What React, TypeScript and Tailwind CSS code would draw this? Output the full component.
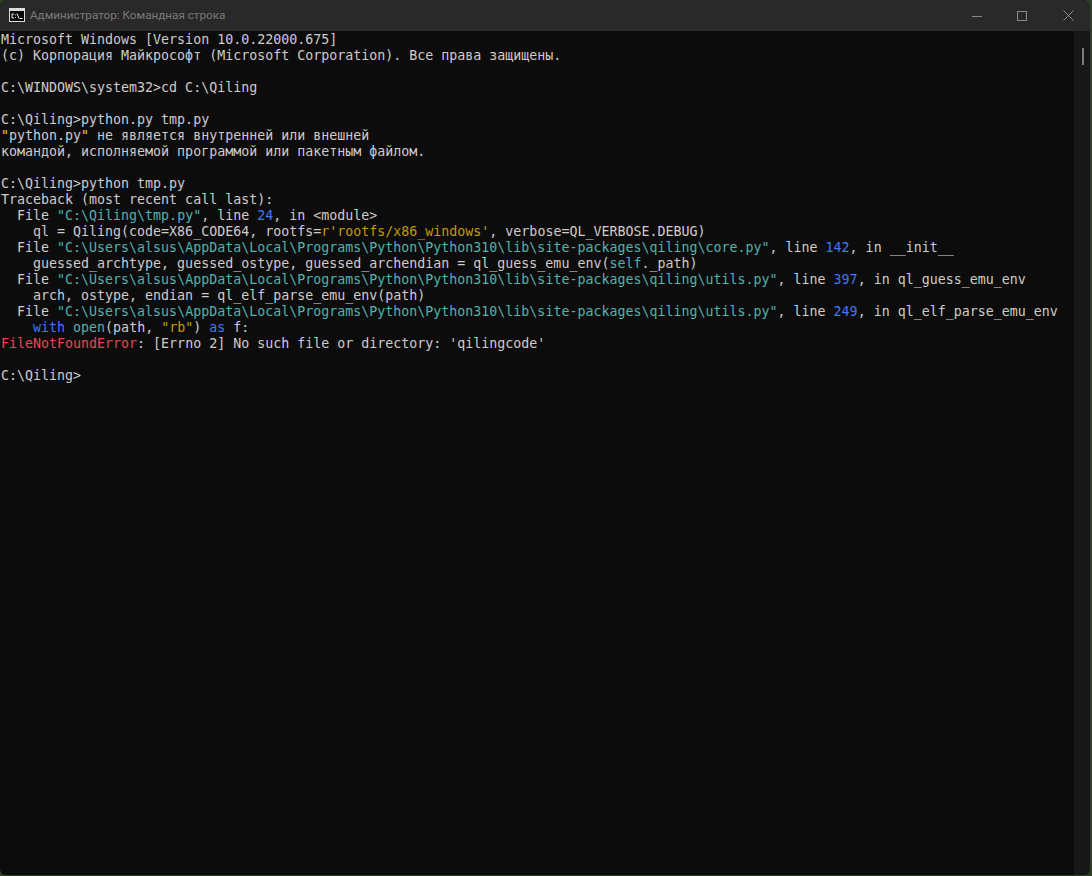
import React from "react";

const G = "text-[#cccccc]";
const C = "text-[#4db3b3]";
const B = "text-[#3b78ff]";
const Y = "text-[#c19c00]";
const R = "text-[#e74856]";

type Seg = [string, string?];
const lines: Seg[][] = [
  [["Microsoft Windows [Version 10.0.22000.675]"]],
  [["(c) Корпорация Майкрософт (Microsoft Corporation). Все права защищены."]],
  [],
  [["C:\\WINDOWS\\system32>cd C:\\Qiling"]],
  [],
  [["C:\\Qiling>python.py tmp.py"]],
  [['"python.py" не является внутренней или внешней']],
  [["командой, исполняемой программой или пакетным файлом."]],
  [],
  [["C:\\Qiling>python tmp.py"]],
  [["Traceback (most recent call last):"]],
  [["  File "], ['"C:\\Qiling\\tmp.py"', C], [", line "], ["24", B], [", in <module>"]],
  [["    ql = Qiling(code=X86_CODE64, rootfs="], ["r'rootfs/x86_windows'", Y], [", verbose=QL_VERBOSE.DEBUG)"]],
  [["  File "], ['"C:\\Users\\alsus\\AppData\\Local\\Programs\\Python\\Python310\\lib\\site-packages\\qiling\\core.py"', C], [", line "], ["142", B], [", in __init__"]],
  [["    guessed_archtype, guessed_ostype, guessed_archendian = ql_guess_emu_env("], ["self", C], ["._path)"]],
  [["  File "], ['"C:\\Users\\alsus\\AppData\\Local\\Programs\\Python\\Python310\\lib\\site-packages\\qiling\\utils.py"', C], [", line "], ["397", B], [", in ql_guess_emu_env"]],
  [["    arch, ostype, endian = ql_elf_parse_emu_env(path)"]],
  [["  File "], ['"C:\\Users\\alsus\\AppData\\Local\\Programs\\Python\\Python310\\lib\\site-packages\\qiling\\utils.py"', C], [", line "], ["249", B], [", in ql_elf_parse_emu_env"]],
  [["    "], ["with", B], [" "], ["open", C], ["(path, "], ['"rb"', Y], [") "], ["as", B], [" f:"]],
  [["FileNotFoundError", R], [": [Errno 2] No such file or directory: 'qilingcode'"]],
  [],
  [["C:\\Qiling>"]],
];

export default function App() {
  return (
    <div className="w-[1092px] h-[876px] bg-[#2f3f26] overflow-hidden pr-[2px] pb-px">
      <div className="w-full h-full rounded-t-lg rounded-b-md bg-[#0c0c0c] flex flex-col overflow-hidden">
        <div className="h-[31px] shrink-0 bg-[#292929] flex items-center pl-[9px]">
          <svg width="16" height="14" viewBox="0 0 16 14" className="shrink-0 mt-[-1px]">
            <rect x="0" y="0" width="16" height="14" fill="#dcdcdc" />
            <rect x="1" y="3" width="14" height="10" fill="#0a0a0a" />
            <path d="M5 6H3v4h2M6.5 6.5v.8M6.5 9v.8M8 5.5l2 5M10.5 10.5h3" stroke="#f0f0f0" strokeWidth="1" fill="none" />
          </svg>
          <span className="ml-[5px] text-[11.7px] text-[#7a7a7a] font-['Roboto','Noto_Sans',sans-serif]">
            Администратор: Командная строка
          </span>
          <div className="ml-auto flex items-center">
            <div className="w-[46px] flex justify-center">
              <svg width="10" height="10" viewBox="0 0 10 10"><path d="M0 5.5h10" stroke="#8a8a8a" strokeWidth="1" /></svg>
            </div>
            <div className="w-[45px] flex justify-center pr-px">
              <svg width="10" height="10" viewBox="0 0 10 10"><rect x="0.5" y="0.5" width="9" height="9" fill="none" stroke="#8a8a8a" strokeWidth="1" /></svg>
            </div>
            <div className="w-[46px] flex justify-center mr-[-1px]">
              <svg width="11" height="11" viewBox="0 0 11 11"><path d="M0.5 0.5l10 10M10.5 0.5l-10 10" stroke="#8a8a8a" strokeWidth="1" /></svg>
            </div>
          </div>
        </div>
        <div className="flex-1 flex min-h-0">
          <div className="flex-1 pl-[1px] pt-px text-[13.3px] leading-[16px] text-[#cccccc] font-['DejaVu_Sans_Mono','Liberation_Mono',monospace] whitespace-pre">
            {lines.map((segs, i) => (
              <div key={i} className="h-[16px]">
                {segs.map(([t, c], j) => (
                  <span key={j} className={c ?? G}>{t}</span>
                ))}
              </div>
            ))}
          </div>
          <div className="w-[16px] shrink-0 bg-[#171717] pt-[17px] pl-[8px]">
            <div className="w-[2px] h-[17px] bg-[#7c7c7c]" />
          </div>
        </div>
      </div>
    </div>
  );
}
